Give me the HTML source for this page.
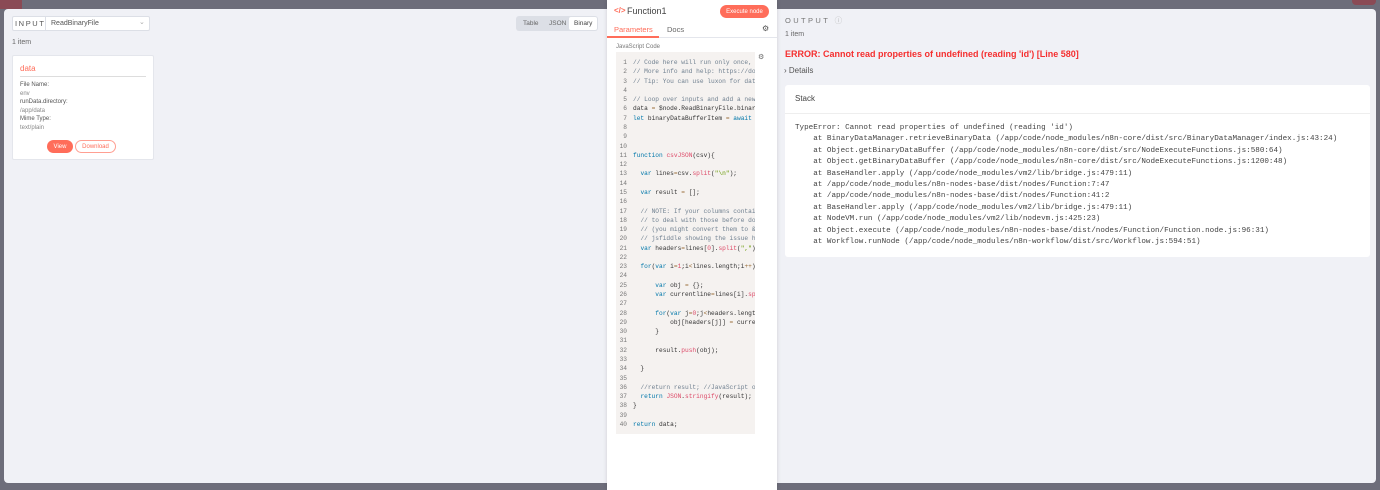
<!DOCTYPE html>
<html><head><meta charset="utf-8"><style>
*{box-sizing:border-box;margin:0;padding:0}
body{width:1380px;height:490px;overflow:hidden;background:#6d6d7a;font-family:"Liberation Sans",sans-serif;position:relative}
.abs{position:absolute}
.btn{display:flex;align-items:center;justify-content:center}
.left{left:4px;top:9px;width:603px;height:474px;background:#f0f1f6;border-radius:4px 0 0 4px}
.right{left:777px;top:9px;width:599px;height:474px;background:#f0f1f6;border-radius:0 4px 4px 0}
.mid{left:607px;top:0;width:170px;height:490px;background:#fff;box-shadow:0 0 4px rgba(0,0,0,.15)}
.code{left:616px;top:52px;width:139px;height:382px;background:#f5f2f0;overflow:hidden;font-family:"Liberation Mono",monospace;font-size:6.2px;line-height:9.28px;color:#333;padding-top:6px;white-space:pre}
.ln{display:inline-block;width:11px;text-align:right;color:#777;margin-right:6px}
.c{color:#708090}.k{color:#07a}.f{color:#dd4a68}.s{color:#690}.o{color:#9a6e3a}
.stack{left:785px;top:85px;width:585px;height:172px;background:#fff;border-radius:3px}
.st{font-family:"Liberation Mono",monospace;font-size:7.6px;line-height:11.4px;color:#444;white-space:pre;left:795px;top:123px}
</style></head><body>
<div class="abs" style="left:0;top:0;width:22px;height:9px;background:#8a4a55"></div>
<div class="abs" style="left:1352px;top:0;width:24px;height:5px;background:#8a4a55;border-radius:0 0 4px 4px"></div>
<div class="abs left"></div>
<div class="abs right"></div>
<div class="abs" style="left:12px;top:16px;width:138px;height:15px;background:#fff;border:1px solid #dcdfe6;border-radius:2px"></div>
<div class="abs" style="left:45px;top:16px;width:1px;height:15px;background:#dcdfe6"></div>
<div class="abs" style="left:15px;top:19px;font-size:7.5px;letter-spacing:1.6px;color:#555">INPUT</div>
<div class="abs" style="left:51px;top:19.5px;font-size:7px;color:#555">ReadBinaryFile</div>
<div class="abs" style="left:139px;top:18px;font-size:7px;color:#aaa">⌄</div>
<div class="abs" style="left:12px;top:39px;font-size:7px;color:#666">1 item</div>
<div class="abs" style="left:516px;top:16px;width:82px;height:15px;background:#dcdfe6;border-radius:3px"></div>
<div class="abs" style="left:569px;top:17px;width:28px;height:13px;background:#fff;border-radius:2px"></div>
<div class="abs" style="left:523px;top:19.5px;font-size:6.5px;color:#666">Table</div>
<div class="abs" style="left:549px;top:19.5px;font-size:6.5px;color:#666">JSON</div>
<div class="abs" style="left:574px;top:19.5px;font-size:6.5px;color:#444">Binary</div>
<div class="abs" style="left:12px;top:55px;width:142px;height:105px;background:#fff;border:1px solid #e4e6ec;border-radius:2px"></div>
<div class="abs" style="left:20px;top:64px;font-size:8px;color:#ff6d5a">data</div>
<div class="abs" style="left:20px;top:76px;width:126px;height:1px;background:#ddd"></div>
<div class="abs" style="left:20px;top:81px;font-size:6px;line-height:8.6px;color:#888">
<span style="color:#555">File Name:</span><br>env<br><span style="color:#555">runData.directory:</span><br>/app/data<br><span style="color:#555">Mime Type:</span><br>text/plain</div>
<div class="abs btn" style="left:47px;top:140px;width:26px;height:13px;background:#ff6d5a;border-radius:7px;color:#fff;font-size:6px">View</div>
<div class="abs btn" style="left:75px;top:140px;width:41px;height:13px;border:1px solid #ff9f92;border-radius:7px;color:#ff6d5a;font-size:6px">Download</div>
<div class="abs mid"></div>
<div class="abs" style="left:614px;top:6px;font-size:8px;color:#ff6d5a;font-weight:bold">&lt;/&gt;</div>
<div class="abs" style="left:627px;top:6px;font-size:9px;color:#444">Function1</div>
<div class="abs btn" style="left:720px;top:5px;width:49px;height:13px;background:#ff6d5a;border-radius:7px;color:#fff;font-size:6px">Execute node</div>
<div class="abs" style="left:614px;top:25px;font-size:7.5px;color:#ff6d5a">Parameters</div>
<div class="abs" style="left:667px;top:25px;font-size:7.5px;color:#666">Docs</div>
<div class="abs" style="left:607px;top:37px;width:170px;height:1px;background:#e4e6ec"></div>
<div class="abs" style="left:607px;top:36px;width:52px;height:2px;background:#ff6d5a"></div>
<div class="abs" style="left:762px;top:24px;font-size:8px;color:#555">⚙</div>
<div class="abs" style="left:616px;top:44px;font-size:6px;color:#777">JavaScript Code</div>
<div class="abs code"><span class="ln">1</span><span class="c">// Code here will run only once, </span>
<span class="ln">2</span><span class="c">// More info and help: https://do</span>
<span class="ln">3</span><span class="c">// Tip: You can use luxon for dat</span>
<span class="ln">4</span>
<span class="ln">5</span><span class="c">// Loop over inputs and add a new</span>
<span class="ln">6</span>data <span class="o">=</span> $node.ReadBinaryFile.binar
<span class="ln">7</span><span class="k">let</span> binaryDataBufferItem <span class="o">=</span> <span class="k">await</span>
<span class="ln">8</span>
<span class="ln">9</span>
<span class="ln">10</span>
<span class="ln">11</span><span class="k">function</span> <span class="f">csvJSON</span>(csv){
<span class="ln">12</span>
<span class="ln">13</span>  <span class="k">var</span> lines<span class="o">=</span>csv.<span class="f">split</span>(<span class="s">"\n"</span>);
<span class="ln">14</span>
<span class="ln">15</span>  <span class="k">var</span> result <span class="o">=</span> [];
<span class="ln">16</span>
<span class="ln">17</span>  <span class="c">// NOTE: If your columns contai</span>
<span class="ln">18</span>  <span class="c">// to deal with those before do</span>
<span class="ln">19</span>  <span class="c">// (you might convert them to &</span>
<span class="ln">20</span>  <span class="c">// jsfiddle showing the issue h</span>
<span class="ln">21</span>  <span class="k">var</span> headers<span class="o">=</span>lines[<span class="f">0</span>].<span class="f">split</span>(<span class="s">","</span>)
<span class="ln">22</span>
<span class="ln">23</span>  <span class="k">for</span>(<span class="k">var</span> i<span class="o">=</span><span class="f">1</span>;i<span class="o">&lt;</span>lines.length;i<span class="o">++</span>)
<span class="ln">24</span>
<span class="ln">25</span>      <span class="k">var</span> obj <span class="o">=</span> {};
<span class="ln">26</span>      <span class="k">var</span> currentline<span class="o">=</span>lines[i].<span class="f">sp</span>
<span class="ln">27</span>
<span class="ln">28</span>      <span class="k">for</span>(<span class="k">var</span> j<span class="o">=</span><span class="f">0</span>;j<span class="o">&lt;</span>headers.lengt
<span class="ln">29</span>          obj[headers[j]] <span class="o">=</span> curre
<span class="ln">30</span>      }
<span class="ln">31</span>
<span class="ln">32</span>      result.<span class="f">push</span>(obj);
<span class="ln">33</span>
<span class="ln">34</span>  }
<span class="ln">35</span>
<span class="ln">36</span>  <span class="c">//return result; //JavaScript o</span>
<span class="ln">37</span>  <span class="k">return</span> <span class="f">JSON</span>.<span class="f">stringify</span>(result);
<span class="ln">38</span>}
<span class="ln">39</span>
<span class="ln">40</span><span class="k">return</span> data;</div>
<div class="abs" style="left:758px;top:53px;font-size:7px;color:#666">⚙</div>
<div class="abs" style="left:785px;top:15px;font-size:7.5px;letter-spacing:2.4px;color:#777">OUTPUT <span style="letter-spacing:0;color:#bbb">ⓘ</span></div>
<div class="abs" style="left:785px;top:31px;font-size:7px;color:#666">1 item</div>
<div class="abs" style="left:785px;top:49px;font-size:9px;color:#f52f2f;font-weight:bold">ERROR: Cannot read properties of undefined (reading 'id') [Line 580]</div>
<div class="abs" style="left:784px;top:66px;font-size:8px;color:#555">› Details</div>
<div class="abs stack"></div>
<div class="abs" style="left:785px;top:113px;width:585px;height:1px;background:#eee"></div>
<div class="abs" style="left:795px;top:94px;font-size:8px;color:#444">Stack</div>
<div class="abs st">TypeError: Cannot read properties of undefined (reading 'id')
    at BinaryDataManager.retrieveBinaryData (/app/code/node_modules/n8n-core/dist/src/BinaryDataManager/index.js:43:24)
    at Object.getBinaryDataBuffer (/app/code/node_modules/n8n-core/dist/src/NodeExecuteFunctions.js:580:64)
    at Object.getBinaryDataBuffer (/app/code/node_modules/n8n-core/dist/src/NodeExecuteFunctions.js:1200:48)
    at BaseHandler.apply (/app/code/node_modules/vm2/lib/bridge.js:479:11)
    at /app/code/node_modules/n8n-nodes-base/dist/nodes/Function:7:47
    at /app/code/node_modules/n8n-nodes-base/dist/nodes/Function:41:2
    at BaseHandler.apply (/app/code/node_modules/vm2/lib/bridge.js:479:11)
    at NodeVM.run (/app/code/node_modules/vm2/lib/nodevm.js:425:23)
    at Object.execute (/app/code/node_modules/n8n-nodes-base/dist/nodes/Function/Function.node.js:96:31)
    at Workflow.runNode (/app/code/node_modules/n8n-workflow/dist/src/Workflow.js:594:51)</div>
</body></html>
